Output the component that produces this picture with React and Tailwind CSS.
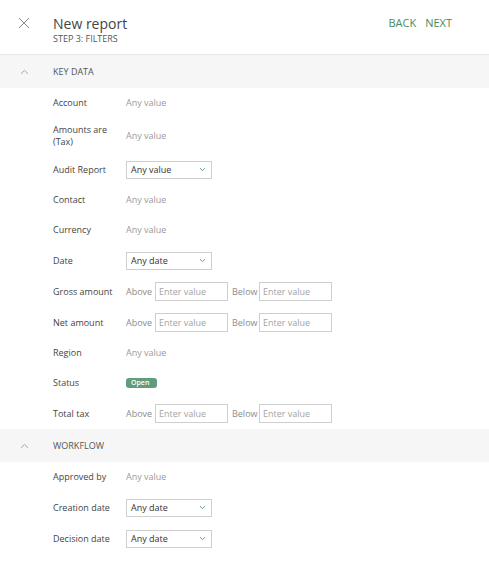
import React from 'react';

const font = { fontFamily: '"Open Sans", "Liberation Sans", sans-serif' };

function Chevron() {
  return (
    <svg width="7" height="5" viewBox="0 0 7 5" fill="none">
      <path d="M1 1.2 L3.5 3.6 L6 1.2" stroke="#6aa37f" strokeWidth="1" />
    </svg>
  );
}

function Select({ value }) {
  return (
    <div className="w-[86px] h-[18px] border border-[#cfcfcf] bg-white flex items-center justify-between pl-[4px] pr-[5px] text-[9px] leading-[12px] text-[#333]">
      <span>{value}</span>
      <Chevron />
    </div>
  );
}

function Input() {
  return (
    <div className="w-[73px] h-[19px] border border-[#cfcfcf] bg-white flex items-center pl-[3px] text-[9px] leading-[12px] text-[#a3a3a3]">
      Enter value
    </div>
  );
}

function Range() {
  return (
    <div className="flex items-center text-[9px] leading-[12px] text-[#8c8c8c]">
      <span className="w-[29px]">Above</span>
      <Input />
      <span className="w-[31px] pl-[4px]">Below</span>
      <Input />
    </div>
  );
}

function Row({ label, h = 'h-[30px]', children }) {
  return (
    <div className={`flex items-center pl-[53px] ${h}`}>
      <div className="w-[73px] text-[9px] leading-[12px] text-[#444]">{label}</div>
      <div className="flex items-center text-[9px] leading-[12px]">{children}</div>
    </div>
  );
}

const Any = () => <span className="text-[#9a9a9a]">Any value</span>;

function Section({ title }) {
  return (
    <div className="h-[33px] bg-[#f6f6f6] flex items-center">
      <div className="w-[53px] flex justify-center pr-[5px]">
        <svg width="9" height="6" viewBox="0 0 9 6" fill="none">
          <path d="M1 4.8 L4.5 1.4 L8 4.8" stroke="#a8a8a8" strokeWidth="1" />
        </svg>
      </div>
      <span className="text-[9px] leading-[12px] text-[#555]">{title}</span>
    </div>
  );
}

export default function App() {
  return (
    <div className="w-[489px] h-[564px] bg-white overflow-hidden" style={font}>
      <div className="h-[55px] border-b border-[#e6e6e6] flex items-start">
        <div className="w-[53px] flex justify-center pt-[17px] pr-[6px]">
          <svg width="12" height="12" viewBox="0 0 12 12" fill="none">
            <path d="M1 1 L11 11 M11 1 L1 11" stroke="#8a8a8a" strokeWidth="1" />
          </svg>
        </div>
        <div className="flex-1 pt-[14px]">
          <div className="text-[14px] leading-[19px] text-[#444]">New report</div>
          <div className="text-[9px] leading-[12px] text-[#555]">STEP 3: FILTERS</div>
        </div>
        <div className="flex gap-[9px] pt-[15px] pr-[37px] text-[11px] leading-[15px] text-[#4a8a5c]">
          <span>BACK</span>
          <span>NEXT</span>
        </div>
      </div>

      <Section title="KEY DATA" />
      <Row label="Account"><Any /></Row>
      <Row label={<>Amounts are<br />(Tax)</>} h="h-[36px]"><Any /></Row>
      <Row label="Audit Report" h="h-[31px]"><Select value="Any value" /></Row>
      <Row label="Contact"><Any /></Row>
      <Row label="Currency"><Any /></Row>
      <Row label="Date" h="h-[31px]"><Select value="Any date" /></Row>
      <Row label="Gross amount" h="h-[31px]"><Range /></Row>
      <Row label="Net amount" h="h-[31px]"><Range /></Row>
      <Row label="Region"><Any /></Row>
      <Row label="Status">
        <span className="inline-flex items-center h-[10px] w-[31px] pl-[5px] rounded-[3px] bg-[#5f9d7e] text-white text-[7px] leading-[10px] font-semibold">Open</span>
      </Row>
      <Row label="Total tax" h="h-[31px]"><Range /></Row>

      <Section title="WORKFLOW" />
      <Row label="Approved by"><Any /></Row>
      <Row label="Creation date" h="h-[31px]"><Select value="Any date" /></Row>
      <Row label="Decision date" h="h-[31px]"><Select value="Any date" /></Row>
    </div>
  );
}
